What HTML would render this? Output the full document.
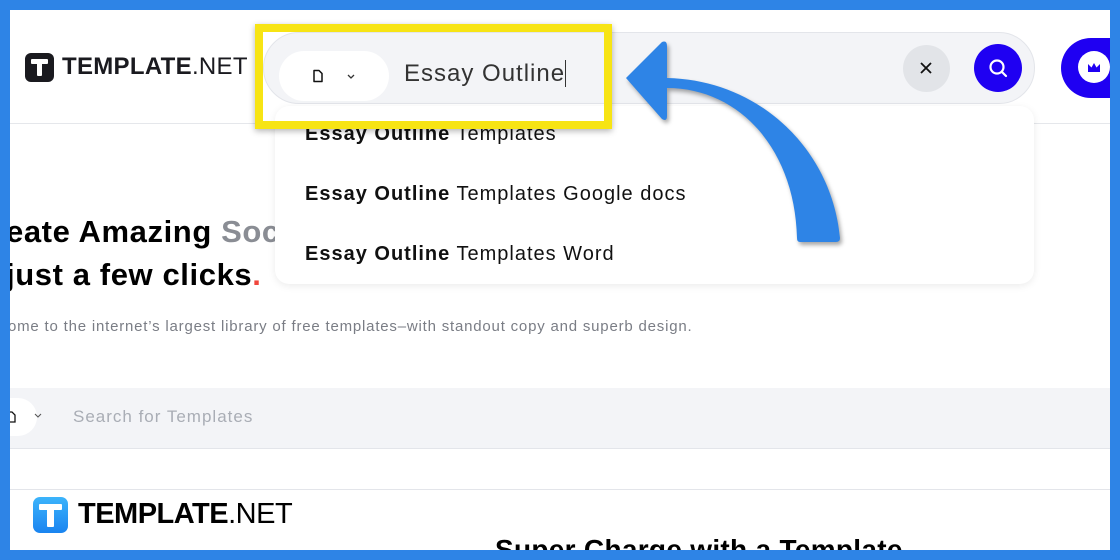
<!DOCTYPE html>
<html><head><meta charset="utf-8"><style>
*{margin:0;padding:0;box-sizing:border-box}
body{width:1120px;height:560px;overflow:hidden;background:#2e84e6;font-family:"Liberation Sans",sans-serif;position:relative}
.page{position:absolute;left:10px;top:10px;width:1100px;height:540px;background:#fff;overflow:hidden}
.abs{position:absolute}
</style></head><body>
<div class="page">
  <div class="abs" style="left:0;top:113px;width:1100px;height:1px;background:#e5e7eb"></div>
  <!-- hero (under dropdown) -->
  <div class="abs" style="left:-4px;top:204px;font-size:31px;font-weight:bold;color:#000;white-space:nowrap;letter-spacing:0.6px">eate Amazing <span style="color:#8a8d94">Soc</span></div>
  <div class="abs" style="left:-4px;top:247px;font-size:31px;font-weight:bold;color:#000;white-space:nowrap;letter-spacing:0.6px">just a few clicks<span style="color:#f0463c">.</span></div>
  <div class="abs" style="left:-2px;top:308px;font-size:15px;color:#7a7d85;white-space:nowrap;letter-spacing:0.8px">ome to the internet’s largest library of free templates–with standout copy and superb design.</div>
  <!-- logo -->
  <div class="abs" style="left:15px;top:43px;width:29px;height:29px;background:#1a1a1f;border-radius:6px"></div>
  <div class="abs" style="left:21px;top:49px;width:17px;height:5px;background:#fff;border-radius:1px"></div>
  <div class="abs" style="left:27px;top:49px;width:5px;height:17px;background:#fff;border-radius:1px"></div>
  <div class="abs" style="left:52px;top:43px;font-size:24px;color:#1a1a1f;letter-spacing:0.3px;white-space:nowrap"><b>TEMPLATE</b>.NET</div>
  <!-- search bar -->
  <div class="abs" style="left:253px;top:22px;width:772px;height:72px;background:#f3f4f7;border:1px solid #e3e5ea;border-radius:36px"></div>
  <div class="abs" style="left:269px;top:41px;width:110px;height:50px;background:#fff;border-radius:25px"></div>
  <svg class="abs" style="left:301px;top:59px" width="14" height="14" viewBox="0 0 14 14"><path d="M3 1.5h5l3 3v8H3z" fill="none" stroke="#111" stroke-width="1.5" stroke-linejoin="round"/></svg>
  <svg class="abs" style="left:336px;top:63px" width="10" height="8" viewBox="0 0 10 8"><path d="M2 2l3 3 3-3" fill="none" stroke="#333" stroke-width="1.3"/></svg>
  <div class="abs" style="left:394px;top:50px;font-size:24px;color:#333;white-space:nowrap;letter-spacing:1px">Essay Outline<span style="border-left:1px solid #333;margin-left:0"></span></div>
  <div class="abs" style="left:893px;top:35px;width:47px;height:47px;border-radius:50%;background:#e2e4e8"></div>
  <svg class="abs" style="left:908px;top:50px" width="16" height="16" viewBox="0 0 16 16"><path d="M3 3l10 10M13 3L3 13" stroke="#111" stroke-width="1.8"/></svg>
  <div class="abs" style="left:964px;top:34px;width:48px;height:48px;border-radius:50%;background:#1f00f2"></div>
  <svg class="abs" style="left:977px;top:47px" width="22" height="22" viewBox="0 0 22 22"><circle cx="10" cy="10" r="6.5" fill="none" stroke="#fff" stroke-width="2.2"/><path d="M15 15l4 4" stroke="#fff" stroke-width="2.2" stroke-linecap="round"/></svg>
  <div class="abs" style="left:1051px;top:28px;width:80px;height:60px;border-radius:30px;background:#1f00f2"></div>
  <div class="abs" style="left:1068px;top:41px;width:32px;height:32px;border-radius:50%;background:#fff"></div>
  <svg class="abs" style="left:1074px;top:48px" width="20" height="18" viewBox="0 0 20 18"><path d="M4 14V6l3.5 3.5L10 5l2.5 4.5L16 6v8z" fill="#1f00f2"/></svg>
  <!-- dropdown -->
  <div class="abs" style="left:265px;top:96px;width:759px;height:178px;background:#fff;border-radius:14px;box-shadow:0 2px 8px rgba(0,0,0,0.08)"></div>
  <div class="abs" style="left:295px;top:113px;font-size:20px;color:#111;white-space:nowrap;letter-spacing:1px"><b>Essay Outline</b> Templates</div>
  <div class="abs" style="left:295px;top:173px;font-size:20px;color:#111;white-space:nowrap;letter-spacing:1px"><b>Essay Outline</b> Templates Google docs</div>
  <div class="abs" style="left:295px;top:233px;font-size:20px;color:#111;white-space:nowrap;letter-spacing:1px"><b>Essay Outline</b> Templates Word</div>
  <!-- gray band -->
  <div class="abs" style="left:0;top:378px;width:1100px;height:61px;background:#f3f4f7;border-bottom:1px solid #e3e5ea"></div>
  <div class="abs" style="left:-20px;top:388px;width:47px;height:38px;background:#fff;border-radius:19px"></div>
  <svg class="abs" style="left:-4px;top:401px" width="10" height="12" viewBox="0 0 10 12"><path d="M1 1h5l3 3v7H1z" fill="none" stroke="#111" stroke-width="1.3"/></svg>
  <svg class="abs" style="left:24px;top:403px" width="8" height="6" viewBox="0 0 8 6"><path d="M1 1l3 3 3-3" fill="none" stroke="#555" stroke-width="1.1"/></svg>
  <div class="abs" style="left:63px;top:397px;font-size:17px;color:#a9adb5;white-space:nowrap;letter-spacing:1px">Search for Templates</div>
  <div class="abs" style="left:0;top:479px;width:1100px;height:1px;background:#e3e5ea"></div>
  <!-- bottom logo -->
  <div class="abs" style="left:23px;top:487px;width:35px;height:36px;border-radius:7px;background:linear-gradient(180deg,#3cb4fb,#1a84f0)"></div>
  <div class="abs" style="left:29px;top:494px;width:23px;height:6px;background:#fff;border-radius:1px"></div>
  <div class="abs" style="left:37px;top:494px;width:7px;height:23px;background:#fff;border-radius:1px"></div>
  <div class="abs" style="left:68px;top:488px;font-size:29px;color:#000;white-space:nowrap;letter-spacing:-0.5px"><b>TEMPLATE</b>.NET</div>
  <div class="abs" style="left:485px;top:524px;font-size:28px;font-weight:bold;color:#000;white-space:nowrap;letter-spacing:0.3px">Super Charge with a Template</div>
  <!-- yellow box -->
  <div class="abs" style="left:245px;top:14px;width:357px;height:105px;border:8px solid #f7e414;box-shadow:0 2px 6px rgba(0,0,0,0.3)"></div>
  <!-- arrow -->
  <svg class="abs" style="left:0;top:0;filter:drop-shadow(2px 3px 2px rgba(0,0,0,0.35))" width="1100" height="540" viewBox="10 10 1100 540">
    <path d="M626 78L662 42Q667 40 667 46V78C760 80 832 150 840 238Q840 242 836 242H800Q797 242 797 238C795 150 740 88 667 88V116Q667 122 662 119Z" fill="#2e84e6"/>
  </svg>
</div>
</body></html>
